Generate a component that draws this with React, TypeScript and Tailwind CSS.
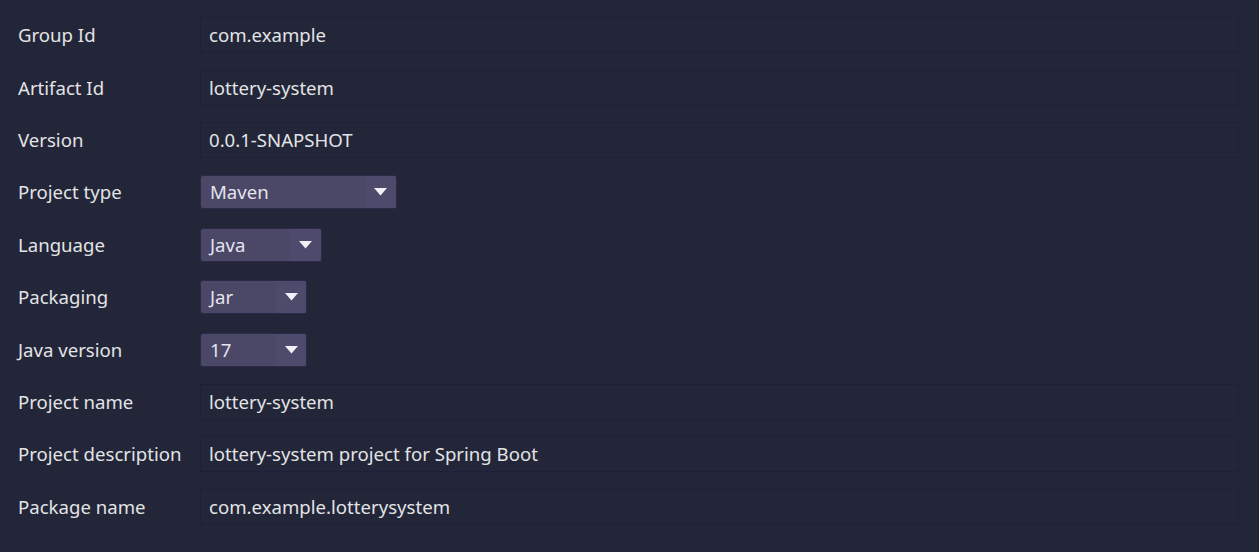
import React from 'react';

type Field =
  | { label: string; kind: 'input'; value: string }
  | { label: string; kind: 'select'; value: string; width: string; textWidth: string };

const fields: Field[] = [
  { label: 'Group Id', kind: 'input', value: 'com.example' },
  { label: 'Artifact Id', kind: 'input', value: 'lottery-system' },
  { label: 'Version', kind: 'input', value: '0.0.1-SNAPSHOT' },
  { label: 'Project type', kind: 'select', value: 'Maven', width: 'w-[197px]', textWidth: 'w-[164px]' },
  { label: 'Language', kind: 'select', value: 'Java', width: 'w-[122px]', textWidth: 'w-[89px]' },
  { label: 'Packaging', kind: 'select', value: 'Jar', width: 'w-[107px]', textWidth: 'w-[75px]' },
  { label: 'Java version', kind: 'select', value: '17', width: 'w-[107px]', textWidth: 'w-[75px]' },
  { label: 'Project name', kind: 'input', value: 'lottery-system' },
  { label: 'Project description', kind: 'input', value: 'lottery-system project for Spring Boot' },
  { label: 'Package name', kind: 'input', value: 'com.example.lotterysystem' },
];

function Select({ value, width, textWidth }: { value: string; width: string; textWidth: string }) {
  return (
    <div className={`flex h-[34px] ${width} overflow-hidden rounded-[3px] border border-[#2b2a48] bg-[#4a4767]`}>
      <div className={`flex ${textWidth} items-center pl-[9px] text-[#e6e4ee]`}>{value}</div>
      <div className="flex flex-1 items-center justify-center bg-[#4d4a6b]">
        <svg width="13" height="8" viewBox="0 0 13 8">
          <path d="M0 0 L13 0 L6.5 7.5 Z" fill="#f2f1f7" />
        </svg>
      </div>
    </div>
  );
}

export default function App() {
  return (
    <div
      className="h-[552px] w-[1259px] bg-[#222638] pt-[9px] text-[18.6px] text-[#e3e3e6]"
      style={{ fontFamily: '"Noto Sans", "Open Sans", sans-serif' }}
    >
      {fields.map(f => (
        <div key={f.label} className="flex h-[52.4px] items-center pr-[20px]">
          <div className="w-[200px] pl-[18px]">{f.label}</div>
          {f.kind === 'input' ? (
            <div className="flex h-[36px] flex-1 items-center border border-[#1d2038] bg-[#222638] pl-[8px]">
              {f.value}
            </div>
          ) : (
            <Select value={f.value} width={f.width} textWidth={f.textWidth} />
          )}
        </div>
      ))}
    </div>
  );
}
